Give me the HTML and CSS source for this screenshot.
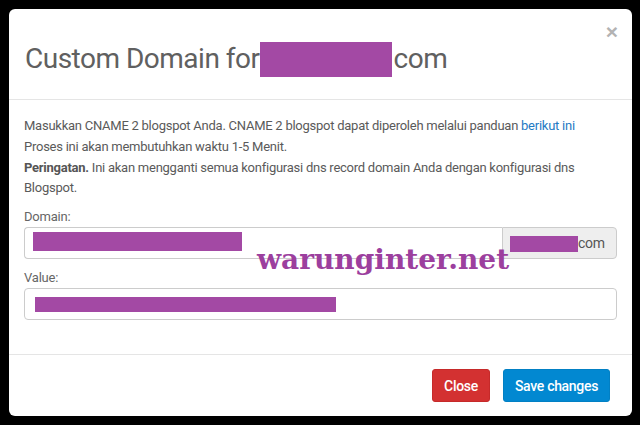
FILE: index.html
```html
<!DOCTYPE html>
<html>
<head>
<meta charset="utf-8">
<link rel="stylesheet" href="styles.css">
</head>
<body>
<div class="modal">
  <div class="modal-header">
    <h2 class="modal-title">Custom Domain for<span class="redact title-redact"></span>com</h2>
    <button class="close-x" type="button">&times;</button>
  </div>
  <div class="modal-body">
    <div class="info">
      <p class="info-line">Masukkan CNAME 2 blogspot Anda. CNAME 2 blogspot dapat diperoleh melalui panduan <a class="link" href="#">berikut ini</a></p>
      <p class="info-line">Proses ini akan membutuhkan waktu 1-5 Menit.</p>
      <p class="info-line"><b class="warn">Peringatan.</b><span>Ini akan mengganti semua konfigurasi dns record domain Anda dengan konfigurasi dns</span></p>
      <p class="info-line">Blogspot.</p>
    </div>
    <div class="form-group">
      <label class="label">Domain:</label>
      <div class="input-group">
        <div class="input input-domain"><span class="redact domain-redact"></span></div>
        <div class="addon"><span class="redact addon-redact"></span>com</div>
      </div>
    </div>
    <div class="form-group">
      <label class="label">Value:</label>
      <div class="input input-value"><span class="redact value-redact"></span></div>
    </div>
  </div>
  <div class="modal-footer">
    <button class="btn btn-close" type="button">Close</button>
    <button class="btn btn-save" type="button">Save changes</button>
  </div>
</div>
<div class="watermark">warunginter.net</div>
</body>
</html>
```
FILE: styles.css
```css
html, body {
  margin: 0;
  padding: 0;
  background: #000;
  height: 425px;
  overflow: hidden;
}
body {
  padding: 9px 8px 0 9px;
  font-family: Roboto, "Liberation Sans", Arial, sans-serif;
  box-sizing: border-box;
  position: relative;
}
.modal {
  width: 623px;
  height: 407px;
  background: #fff;
  border-radius: 6px;
  box-sizing: border-box;
  display: flex;
  flex-direction: column;
  overflow: hidden;
}
.modal-header {
  height: 91px;
  box-sizing: border-box;
  border-bottom: 1px solid #e5e5e5;
  padding: 13px 14px 0 16px;
  display: flex;
  justify-content: space-between;
  align-items: flex-start;
}
.modal-title {
  margin: 21px 0 0 0;
  font-size: 28px;
  font-weight: 400;
  line-height: 31px;
  color: #606060;
  letter-spacing: -0.5px;
}
.redact {
  display: inline-block;
  background: #a349a4;
}
.title-redact {
  width: 132px;
  height: 35px;
  vertical-align: top;
  margin-top: -1px;
  margin-right: 2px;
}
.close-x {
  border: 0;
  background: none;
  padding: 0;
  font-family: "Liberation Sans", Arial, sans-serif;
  font-size: 21px;
  font-weight: 700;
  line-height: 20px;
  color: #b3b3b3;
}
.modal-body {
  flex: 1;
  padding: 16px 15px 0 15px;
}
.info {
  font-size: 13px;
  line-height: 20.8px;
  color: #5a5a5a;
  letter-spacing: -0.25px;
}
.info-line {
  margin: 0;
  white-space: nowrap;
}
.warn {
  color: #555;
  margin-right: 3px;
}
.link {
  color: #1f7ac4;
  text-decoration: none;
}
.form-group {
  display: flex;
  flex-direction: column;
}
.form-group + .form-group {
  margin-top: 9px;
}
.label {
  display: block;
  margin-top: 8px;
  font-size: 13px;
  line-height: 20px;
  color: #666;
  letter-spacing: -0.2px;
}
.form-group + .form-group .label {
  margin-top: 0;
}
.input-group {
  display: flex;
  height: 32px;
}
.input {
  border: 1px solid #ccc;
  border-radius: 4px;
  background: #fff;
  box-sizing: border-box;
  display: flex;
  align-items: flex-start;
}
.input-domain {
  flex: 1;
  height: 32px;
  border-radius: 4px 0 0 4px;
  border-right: 0;
  padding: 4px 8px;
}
.domain-redact {
  width: 209px;
  height: 19px;
}
.addon {
  width: 115px;
  height: 32px;
  box-sizing: border-box;
  background: #eee;
  border: 1px solid #ccc;
  border-radius: 0 4px 4px 0;
  padding: 0 0 0 7px;
  display: flex;
  align-items: center;
  font-size: 14px;
  color: #555;
  letter-spacing: -0.3px;
}
.addon-redact {
  width: 68px;
  height: 16px;
  margin-top: 1px;
}
.input-value {
  height: 32px;
  padding: 8px 10px;
}
.value-redact {
  width: 301px;
  height: 15px;
}
.modal-footer {
  height: 62px;
  box-sizing: border-box;
  border-top: 1px solid #e5e5e5;
  padding: 14px 22px 0 0;
  display: flex;
  justify-content: flex-end;
  align-items: flex-start;
  gap: 13px;
}
.btn {
  height: 33px;
  border-radius: 3px;
  border: 1px solid transparent;
  color: #fff;
  font-family: Roboto, "Liberation Sans", Arial, sans-serif;
  font-size: 14px;
  font-weight: 500;
  padding: 0;
  white-space: nowrap;
  text-align: center;
  letter-spacing: -0.3px;
}
.btn-close {
  width: 58px;
  background: #d33131;
  border-color: #c62a2a;
}
.btn-save {
  width: 107px;
  background: #0288d1;
  border-color: #0280c4;
}
.watermark {
  position: absolute;
  left: 257px;
  top: 242px;
  font-family: "DejaVu Serif", "Liberation Serif", serif;
  font-weight: 700;
  font-size: 28px;
  line-height: 36px;
  color: #9c3f9e;
}
```
